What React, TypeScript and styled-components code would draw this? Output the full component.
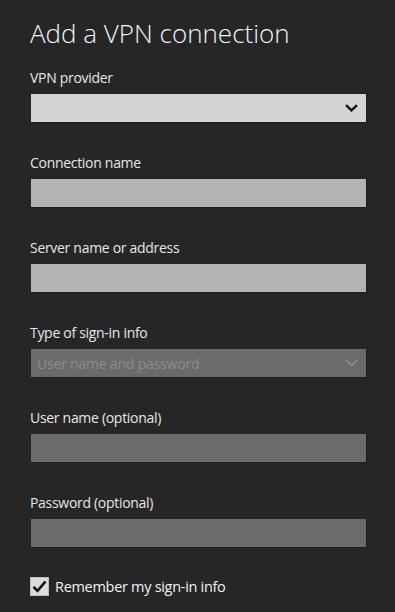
import React from 'react';
import styled, { createGlobalStyle } from 'styled-components';

const Global = createGlobalStyle`
  html, body {
    margin: 0;
    padding: 0;
    background: #262626;
  }
  body {
    font-family: "Open Sans", "Noto Sans", sans-serif;
  }
`;

const Page = styled.div`
  width: 395px;
  height: 612px;
  box-sizing: border-box;
  padding: 16px 28px 0 30px;
  background: #262626;
  display: flex;
  flex-direction: column;
  overflow: hidden;
`;

const Title = styled.h1`
  margin: 0 0 18px;
  font-weight: 300;
  font-size: 26px;
  line-height: 34px;
  color: #f2f2f2;
  letter-spacing: 0;
`;

const Form = styled.div`
  display: flex;
  flex-direction: column;
  gap: 30px;
`;

const Field = styled.div`
  display: flex;
  flex-direction: column;
  gap: 6px;
`;

const Label = styled.div`
  font-size: 14px;
  line-height: 20px;
  color: #e6e6e6;
  letter-spacing: -0.3px;
`;

const Box = styled.div<{ $bg: string }>`
  height: 29px;
  margin-left: 1px;
  box-sizing: border-box;
  background: ${p => p.$bg};
  border-right: 1px solid #1c1c1c;
  border-bottom: 1px solid #1e1e1e;
  display: flex;
  align-items: center;
  padding: 0 8px 0 6px;
`;

const BoxText = styled.span`
  flex: 1;
  font-size: 14px;
  color: #8c8c8c;
  letter-spacing: -0.2px;
`;

const Spacer = styled.span`
  flex: 1;
`;

const CheckRow = styled.div`
  margin-top: 29px;
  display: flex;
  align-items: center;
  gap: 6px;
`;

const CheckBox = styled.div`
  width: 19px;
  height: 19px;
  box-sizing: border-box;
  background: #dcdcdc;
  border: 1px solid #bdbdbd;
  display: flex;
  align-items: center;
  justify-content: center;
`;

const CheckText = styled.span`
  font-size: 14.5px;
  color: #f2f2f2;
  letter-spacing: -0.3px;
`;

const Chevron = ({ color, width }: { color: string; width: number }) => (
  <svg width="13" height="8" viewBox="0 0 13 8">
    <path d="M1 1.2 L6.5 6.4 L12 1.2" fill="none" stroke={color} strokeWidth={width} />
  </svg>
);

export default function App() {
  return (
    <Page>
      <Global />
      <Title>Add a VPN connection</Title>
      <Form>
        <Field>
          <Label>VPN provider</Label>
          <Box $bg="#d4d4d4">
            <Spacer />
            <Chevron color="#111" width={2.4} />
          </Box>
        </Field>
        <Field>
          <Label>Connection name</Label>
          <Box $bg="#b3b3b3" />
        </Field>
        <Field>
          <Label>Server name or address</Label>
          <Box $bg="#b3b3b3" />
        </Field>
        <Field>
          <Label>Type of sign-in info</Label>
          <Box $bg="#6b6b6b">
            <BoxText>User name and password</BoxText>
            <Chevron color="#8a8a8a" width={1.8} />
          </Box>
        </Field>
        <Field>
          <Label>User name (optional)</Label>
          <Box $bg="#6b6b6b" />
        </Field>
        <Field>
          <Label>Password (optional)</Label>
          <Box $bg="#6b6b6b" />
        </Field>
      </Form>
      <CheckRow>
        <CheckBox>
          <svg width="15" height="13" viewBox="0 0 15 13">
            <path d="M1.5 6.8 L5.5 10.8 L13.5 1.5" fill="none" stroke="#111" strokeWidth="2.6" />
          </svg>
        </CheckBox>
        <CheckText>Remember my sign-in info</CheckText>
      </CheckRow>
    </Page>
  );
}
